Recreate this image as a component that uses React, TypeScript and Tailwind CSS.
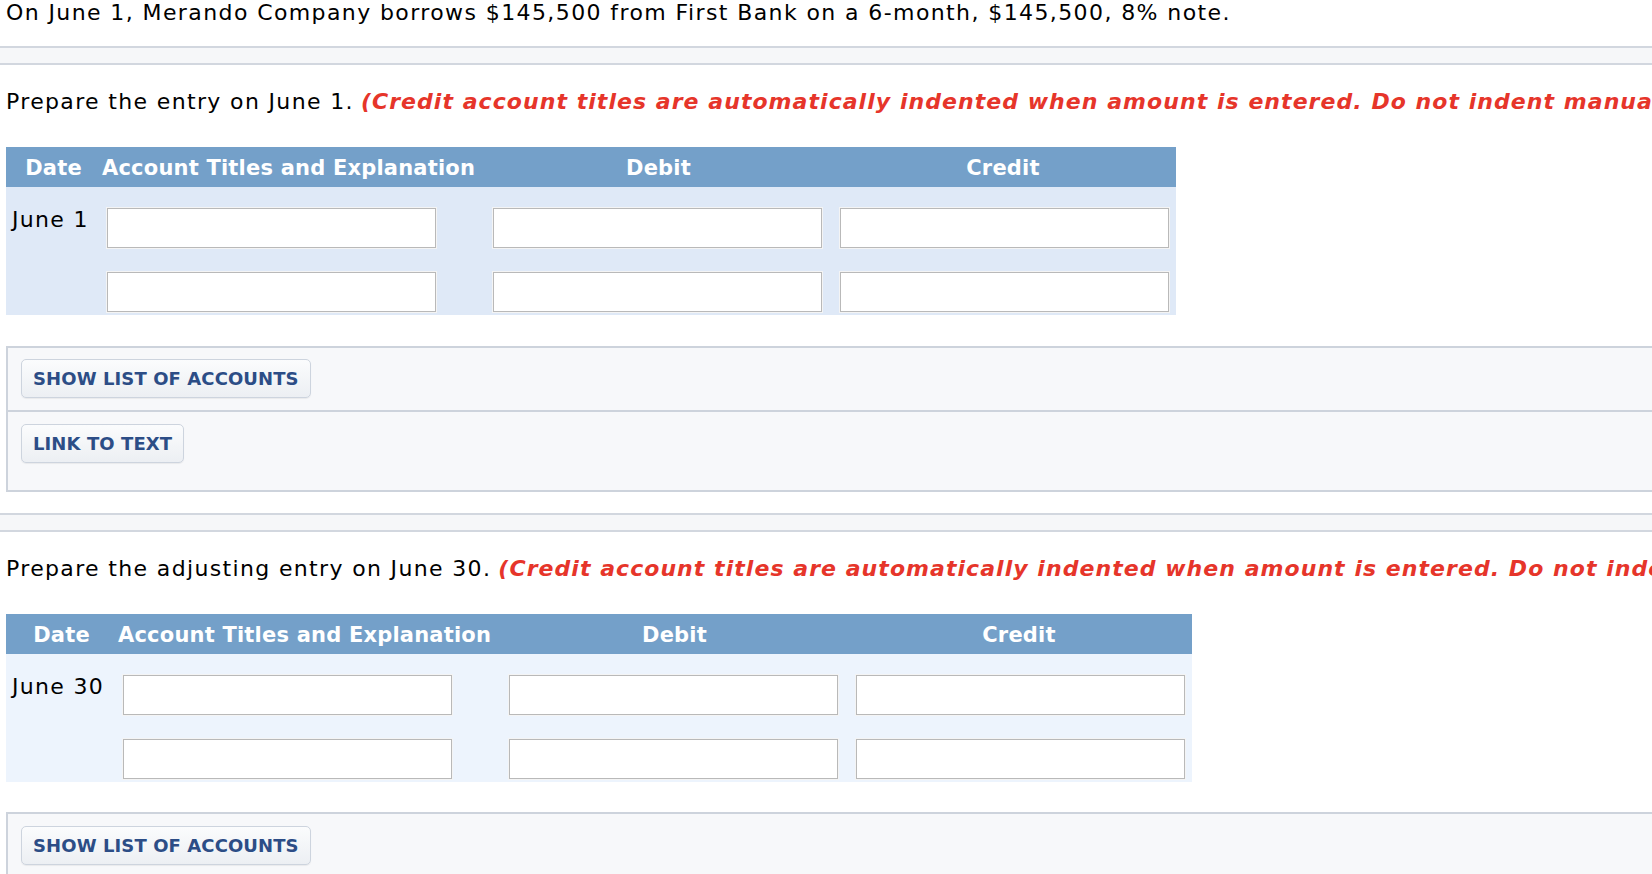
import React from 'react';

type Row = { date?: string };

const Field = () => (
  <input
    type="text"
    className="h-[40px] w-[329px] border border-[#b9b9b9] bg-white shadow-[0_0_0_1px_#f4f4f4] outline-none"
  />
);

const Separator = ({ className = '' }: { className?: string }) => (
  <div className={`h-[19px] w-[1700px] border-y-2 border-[#d2d7df] bg-[#f6f7f9] ${className}`} />
);

const PanelButton = ({ label }: { label: string }) => (
  <button className="h-[39px] rounded-[5px] border border-[#cdd4de] bg-gradient-to-b from-[#fbfcfd] to-[#eceff3] px-[11px] text-[18px] font-bold tracking-[0.1px] text-[#2c4d86] shadow-[0_1px_1px_rgba(0,0,0,0.06)]">
    {label}
  </button>
);

const JournalTable = ({
  date,
  dateWidth,
  bodyBg,
}: {
  date: string;
  dateWidth: string;
  bodyBg: string;
}) => {
  const rows: Row[] = [{ date }, {}];
  return (
    <div className="ml-[6px] w-fit">
      <div className="flex h-[40px] items-center bg-[#74a0c9] pt-[4px] text-[21px] font-bold tracking-[0.2px] text-white">
        <div className={`${dateWidth} text-center`}>Date</div>
        <div className="w-[386px] pl-[1px]">Account Titles and Explanation</div>
        <div className="w-[343px] text-center">Debit</div>
        <div className="w-[346px] text-center">Credit</div>
      </div>
      <div className={`${bodyBg} pt-[21px] pb-[3px]`}>
        {rows.map((row, i) => (
          <div key={i} className={`flex ${i > 0 ? 'mt-[24px]' : ''}`}>
            <div className={`${dateWidth} pl-[6px] leading-[24px] tracking-[1.3px]`}>{row.date}</div>
            <div className="w-[386px] pl-[6px]">
              <Field />
            </div>
            <div className="w-[343px] pl-[6px]">
              <Field />
            </div>
            <div className="w-[346px] pl-[10px]">
              <Field />
            </div>
          </div>
        ))}
      </div>
    </div>
  );
};

const Instruction = ({ lead }: { lead: string }) => (
  <p className="pl-[6px] leading-[26px] whitespace-nowrap">
    <span className="tracking-[1.35px]">{lead}</span>{' '}
    <span className="font-bold italic tracking-[1.05px] text-[#e6352a]">
      (Credit account titles are automatically indented when amount is entered. Do not indent manually.)
    </span>
  </p>
);

export default function App() {
  return (
    <div className="h-[874px] w-[1652px] overflow-hidden bg-white font-['DejaVu_Sans',Verdana,sans-serif] text-[22px] text-black">
      <p className="pl-[6px] leading-[26px] tracking-[1.4px] whitespace-nowrap">
        On June 1, Merando Company borrows $145,500 from First Bank on a 6-month, $145,500, 8% note.
      </p>

      <Separator className="mt-[20px]" />

      <div className="mt-[24px]">
        <Instruction lead="Prepare the entry on June 1." />
      </div>

      <div className="mt-[32px]">
        <JournalTable date="June 1" dateWidth="w-[95px]" bodyBg="bg-[#dfe9f7]" />
      </div>

      <div className="ml-[6px] mt-[31px] w-[1700px] border-2 border-[#cdd3dc] bg-[#f7f8fa]">
        <div className="px-[13px] pt-[11px] pb-[12px]">
          <PanelButton label="SHOW LIST OF ACCOUNTS" />
        </div>
        <div className="border-t-2 border-[#cdd3dc] px-[13px] pt-[12px] pb-[27px]">
          <PanelButton label="LINK TO TEXT" />
        </div>
      </div>

      <Separator className="mt-[21px]" />

      <div className="mt-[24px]">
        <Instruction lead="Prepare the adjusting entry on June 30." />
      </div>

      <div className="mt-[32px]">
        <JournalTable date="June 30" dateWidth="w-[111px]" bodyBg="bg-[#edf4fd]" />
      </div>

      <div className="ml-[6px] mt-[30px] w-[1700px] border-2 border-[#cdd3dc] bg-[#f7f8fa]">
        <div className="px-[13px] pt-[12px] pb-[13px]">
          <PanelButton label="SHOW LIST OF ACCOUNTS" />
        </div>
      </div>
    </div>
  );
}
